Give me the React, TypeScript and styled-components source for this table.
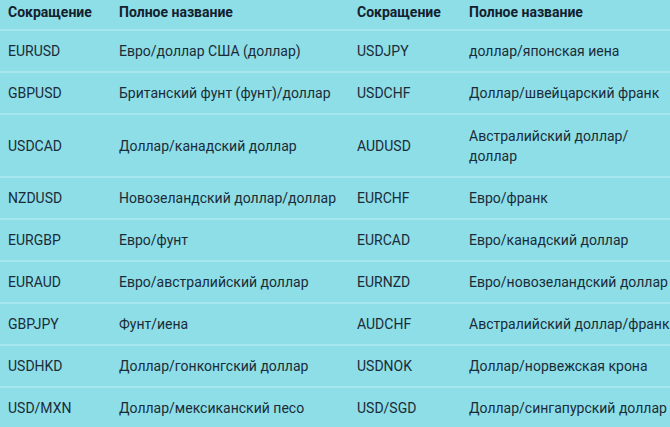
import React from "react";
import styled, { createGlobalStyle } from "styled-components";

const GlobalStyle = createGlobalStyle`
    html, body {
        margin: 0;
        padding: 0;
        background: #8ddee7;
    }
    body {
        font-family: Roboto, "Liberation Sans", sans-serif;
        color: #1d2e3b;
    }
`;

const Table = styled.div`
    width: 670px;
    height: 427px;
    overflow: hidden;
    background: #8ddee7;
`;

const Row = styled.div<{ $head?: boolean; $tall?: boolean }>`
    display: grid;
    grid-template-columns: 111px 238px 112px 1fr;
    align-items: center;
    box-sizing: border-box;
    height: ${(props) => (props.$head ? "31px" : props.$tall ? "63px" : "42px")};
    padding-bottom: ${(props) => (props.$head ? "6px" : "0")};
    border-bottom: 2px solid #a6e7ee;
`;

const Cell = styled.div<{ $head?: boolean }>`
    padding-left: 8px;
    font-size: 14px;
    line-height: 20px;
    white-space: pre;
    font-weight: ${(props) => (props.$head ? 700 : 400)};
    color: ${(props) => (props.$head ? "#14212d" : "#1b2c39")};
`;

interface IPair {
    code: string;
    name: string;
}

const rows: { left: IPair; right: IPair; tall?: boolean }[] = [
    { left: { code: "EURUSD", name: "Евро/доллар США (доллар)" }, right: { code: "USDJPY", name: "доллар/японская иена" } },
    { left: { code: "GBPUSD", name: "Британский фунт (фунт)/доллар" }, right: { code: "USDCHF", name: "Доллар/швейцарский франк" } },
    { left: { code: "USDCAD", name: "Доллар/канадский доллар" }, right: { code: "AUDUSD", name: "Австралийский доллар/\nдоллар" }, tall: true },
    { left: { code: "NZDUSD", name: "Новозеландский доллар/доллар" }, right: { code: "EURCHF", name: "Евро/франк" } },
    { left: { code: "EURGBP", name: "Евро/фунт" }, right: { code: "EURCAD", name: "Евро/канадский доллар" } },
    { left: { code: "EURAUD", name: "Евро/австралийский доллар" }, right: { code: "EURNZD", name: "Евро/новозеландский доллар" } },
    { left: { code: "GBPJPY", name: "Фунт/иена" }, right: { code: "AUDCHF", name: "Австралийский доллар/франк" } },
    { left: { code: "USDHKD", name: "Доллар/гонконгский доллар" }, right: { code: "USDNOK", name: "Доллар/норвежская крона" } },
    { left: { code: "USD/MXN", name: "Доллар/мексиканский песо" }, right: { code: "USD/SGD", name: "Доллар/сингапурский доллар" } },
];

function App() {
    return (
        <>
            <GlobalStyle />
            <Table>
                <Row $head>
                    <Cell $head>Сокращение</Cell>
                    <Cell $head>Полное название</Cell>
                    <Cell $head>Сокращение</Cell>
                    <Cell $head>Полное название</Cell>
                </Row>
                {rows.map((row) => (
                    <Row key={row.left.code} $tall={row.tall}>
                        <Cell>{row.left.code}</Cell>
                        <Cell>{row.left.name}</Cell>
                        <Cell>{row.right.code}</Cell>
                        <Cell>{row.right.name}</Cell>
                    </Row>
                ))}
            </Table>
        </>
    );
}

export default App;
